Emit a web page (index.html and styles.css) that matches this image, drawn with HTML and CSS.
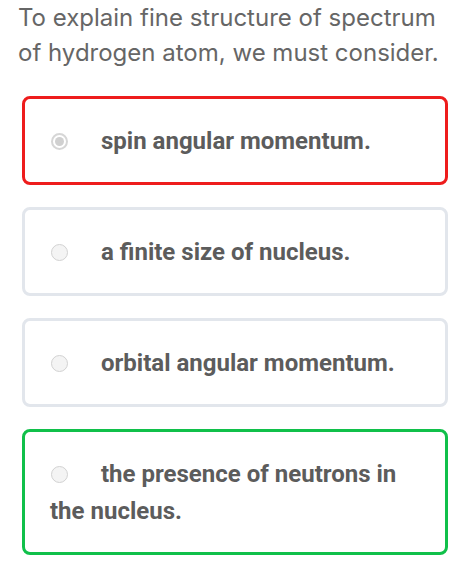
FILE: index.html
```html
<!DOCTYPE html>
<html lang="en">

<head>
    <meta charset="UTF-8">
    <meta name="viewport" content="width=device-width, initial-scale=1.0">
    <title>Question</title>
    <link rel="stylesheet" href="styles.css">
</head>

<body>
    <div class="question-box">
        <p class="question-text">To explain fine structure of spectrum of hydrogen atom, we must consider.</p>
        <ul class="option-list">
            <li class="option-item wrong-answer">
                <span class="radio-dot checked"></span><span class="option-text">spin angular momentum.</span>
            </li>
            <li class="option-item">
                <span class="radio-dot"></span><span class="option-text">a finite size of nucleus.</span>
            </li>
            <li class="option-item">
                <span class="radio-dot"></span><span class="option-text">orbital angular momentum.</span>
            </li>
            <li class="option-item right-answer">
                <span class="radio-dot"></span><span class="option-text">the presence of neutrons in the nucleus.</span>
            </li>
        </ul>
    </div>
</body>

</html>
```

FILE: styles.css
```css
body {
    margin: 0;
    background: #fff;
}

.question-box {
    padding: 0 13px 0 22px;
}

.question-text {
    font-family: "Inter", "Open Sans", sans-serif;
    font-size: 24px;
    line-height: 35px;
    color: #666;
    margin: 0 0 26px -4px;
    padding-top: 0;
}

ul.option-list {
    list-style: none;
    padding: 0;
    margin: 0;
}

.option-list li {
    border: 3px solid #e2e6ec;
    border-radius: 8px;
    padding: 24px 20px 22px 25px;
    margin-bottom: 22px;
    font-family: "Roboto", sans-serif;
    font-weight: 700;
    font-size: 24px;
    line-height: 37px;
    color: #5c5c5c;
}

.option-list li.wrong-answer {
    border-color: #ee1c1c;
}

.option-list li.right-answer {
    border-color: #10c04a;
}

.radio-dot {
    display: inline-block;
    width: 15px;
    height: 15px;
    border: 1px solid #d2d2d2;
    border-radius: 100%;
    background: #f4f4f4;
    margin: 0 33px 0 1px;
    vertical-align: -1px;
    position: relative;
}

.radio-dot.checked {
    border: 2px solid #d6d6d6;
    width: 13px;
    height: 13px;
    background: #fff;
}

.radio-dot.checked:after {
    content: "";
    position: absolute;
    left: 2px;
    top: 2px;
    width: 9px;
    height: 9px;
    border-radius: 100%;
    background: #d0d0d0;
}
```
